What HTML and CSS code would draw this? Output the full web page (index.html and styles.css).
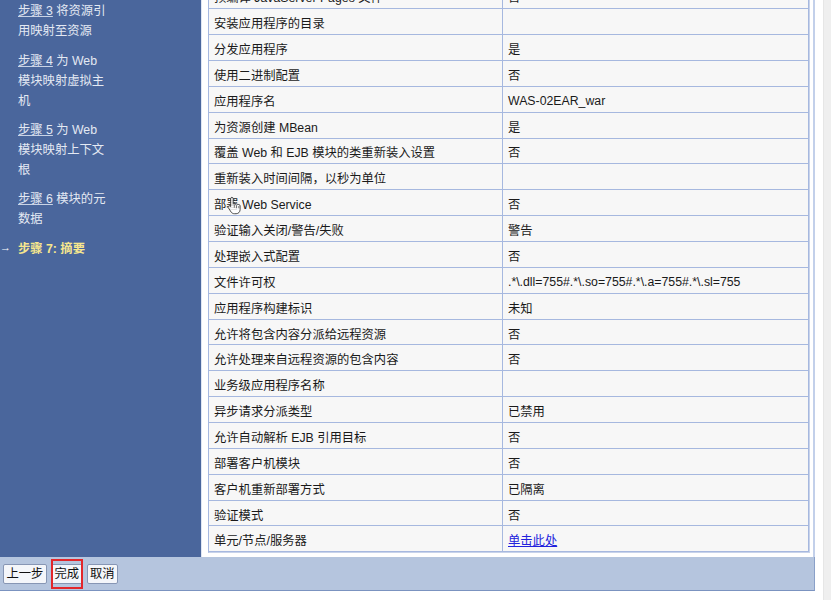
FILE: index.html
```html
<!DOCTYPE html>
<html lang="zh-CN">
<head>
<meta charset="utf-8">
<title>安装新的应用程序 - 摘要</title>
<link rel="stylesheet" href="styles.css">
</head>
<body>
<div class="screen">
  <div class="frame">
    <div class="main">
      <nav class="steps">
        <div class="step"><span class="mark"></span><span class="txt"><a class="sl">步骤 3</a> 将资源引用映射至资源</span></div>
        <div class="step"><span class="mark"></span><span class="txt"><a class="sl">步骤 4</a> 为 Web 模块映射虚拟主机</span></div>
        <div class="step"><span class="mark"></span><span class="txt"><a class="sl">步骤 5</a> 为 Web 模块映射上下文根</span></div>
        <div class="step"><span class="mark"></span><span class="txt"><a class="sl">步骤 6</a> 模块的元数据</span></div>
        <div class="step current"><span class="mark">→</span><span class="txt">步骤 7: 摘要</span></div>
      </nav>
      <div class="content">
        <table class="summary">
          <colgroup><col class="c1"><col class="c2"></colgroup>
          <tr><td>预编译 JavaServer Pages 文件</td><td>否</td></tr>
          <tr><td>安装应用程序的目录</td><td></td></tr>
          <tr><td>分发应用程序</td><td>是</td></tr>
          <tr><td>使用二进制配置</td><td>否</td></tr>
          <tr><td>应用程序名</td><td>WAS-02EAR_war</td></tr>
          <tr><td>为资源创建 MBean</td><td>是</td></tr>
          <tr><td>覆盖 Web 和 EJB 模块的类重新装入设置</td><td>否</td></tr>
          <tr><td>重新装入时间间隔，以秒为单位</td><td></td></tr>
          <tr><td><span class="hover">部署 Web Service<svg class="cursor" viewBox="0 0 17 22" width="15" height="19" aria-hidden="true"><path d="M5.5 1.5c.8 0 1.5.7 1.5 1.5v6.2c.3-.4.8-.6 1.300-.6.7 0 1.2.4 1.4 1 .3-.4.8-.6 1.3-.6.7 0 1.3.5 1.4 1.1.3-.2.6-.3 1-.3.9 0 1.6.7 1.6 1.6v4.4c0 2.6-2 4.7-4.600 4.7H8.3c-1.5 0-2.8-.7-3.7-1.9L1.4 13.7c-.5-.7-.4-1.6.3-2.1.6-.5 1.5-.4 2 .2L4 12.3V3c0-.8.7-1.5 1.5-1.5z" fill="#ffffff" fill-opacity="0.85" stroke="#333333" stroke-width="1" stroke-linejoin="round"/><path d="M8.3 9.6v4M10.9 10.6v3.4M13.5 11.6v2.6" stroke="#333333" stroke-width=".8" fill="none"/></svg></span></td><td>否</td></tr>
          <tr><td>验证输入关闭/警告/失败</td><td>警告</td></tr>
          <tr><td>处理嵌入式配置</td><td>否</td></tr>
          <tr><td>文件许可权</td><td>.*\.dll=755#.*\.so=755#.*\.a=755#.*\.sl=755</td></tr>
          <tr><td>应用程序构建标识</td><td>未知</td></tr>
          <tr><td>允许将包含内容分派给远程资源</td><td>否</td></tr>
          <tr><td>允许处理来自远程资源的包含内容</td><td>否</td></tr>
          <tr><td>业务级应用程序名称</td><td></td></tr>
          <tr><td>异步请求分派类型</td><td>已禁用</td></tr>
          <tr><td>允许自动解析 EJB 引用目标</td><td>否</td></tr>
          <tr><td>部署客户机模块</td><td>否</td></tr>
          <tr><td>客户机重新部署方式</td><td>已隔离</td></tr>
          <tr><td>验证模式</td><td>否</td></tr>
          <tr><td>单元/节点/服务器</td><td><a class="link" href="#">单击此处</a></td></tr>
        </table>
      </div>
    </div>
    <div class="bar">
      <button class="btn" type="button">上一步</button>
      <span class="hl"><button class="btn" type="button">完成</button></span>
      <button class="btn" type="button">取消</button>
    </div>
  </div>
  <div class="gutter"><div class="track"></div></div>
</div>
</body>
</html>
```
FILE: styles.css
```css
html, body {
  margin: 0;
  padding: 0;
  background: #ffffff;
}
body {
  font-family: "Liberation Sans", "Noto Sans CJK SC", sans-serif;
  font-size: 12.3px;
  color: #1a1a1a;
}
.screen {
  display: flex;
  width: 831px;
  height: 600px;
  overflow: hidden;
}
.frame {
  width: 815px;
  display: flex;
  flex-direction: column;
}
.main {
  display: flex;
  height: 557px;
  overflow: hidden;
}
.steps {
  width: 201px;
  flex: none;
  background: #4a669c;
  color: #e4e9f3;
  padding-top: 2.3px;
  box-sizing: border-box;
}
.step {
  display: flex;
  line-height: 19.9px;
  margin-bottom: 9.6px;
}
.mark {
  width: 18px;
  flex: none;
  font-size: 11px;
  line-height: 15px;
  color: #ffffff;
}
.txt {
  width: 92px;
}
.sl {
  color: #e4e9f3;
  text-decoration: underline;
  text-decoration-color: #c9d3e6;
}
.current .txt {
  color: #f6e68e;
  font-weight: bold;
}
.content {
  flex: 1;
  background: #ffffff;
  border-left: 1px solid #dfe6f3;
  border-right: 2px solid #c3d0ea;
  padding: 0 4px 0 6px;
  overflow: hidden;
}
.summary {
  width: 601px;
  table-layout: fixed;
  border-collapse: separate;
  border-spacing: 0;
  border-left: 1px solid #a6b8df;
  border-right: 1px solid #c8d3ea;
  border-bottom: 1px solid #c8d3ea;
  margin-top: -16.6px;
}
.c1 { width: 294px; }
.c2 { width: 306px; }
.summary td {
  height: 25.87px;
  box-sizing: border-box;
  padding: 3px 5px 0;
  background: #f7f7f7;
  border-bottom: 1px solid #a6b8df;
  white-space: nowrap;
  overflow: hidden;
  vertical-align: middle;
}
.summary td:first-child {
  border-right: 1px solid #a6b8df;
}
.summary td:last-child {
  border-right: 1px solid #a6b8df;
}
.hover {
  position: relative;
}
.cursor {
  position: absolute;
  left: 13px;
  top: -2px;
}
.link {
  color: #2121dd;
  text-decoration: underline;
}
.bar {
  height: 34px;
  box-sizing: border-box;
  background: #b5c5de;
  border-bottom: 1px solid #7b93c0;
  border-right: 1px solid #8aa0c8;
  display: flex;
  align-items: center;
  gap: 4px;
  padding: 0 0 0 3px;
}
.btn {
  font-family: "Liberation Sans", "Noto Sans CJK SC", sans-serif;
  font-size: 12.3px;
  color: #111111;
  background: #f4f6fa;
  border: 1px solid #8796b4;
  border-radius: 2px;
  height: 20px;
  padding: 0 2.5px;
  line-height: 18px;
  margin: 0;
}
.hl {
  position: relative;
  display: inline-flex;
}
.hl::after {
  content: "";
  position: absolute;
  left: 0;
  right: 0;
  top: -5px;
  bottom: -5px;
  border: 2px solid #e3262a;
}
.gutter {
  flex: 1;
  display: flex;
  justify-content: flex-end;
}
.track {
  width: 7px;
  background: #efefef;
  border-left: 1px solid #e6e6e6;
}
```
